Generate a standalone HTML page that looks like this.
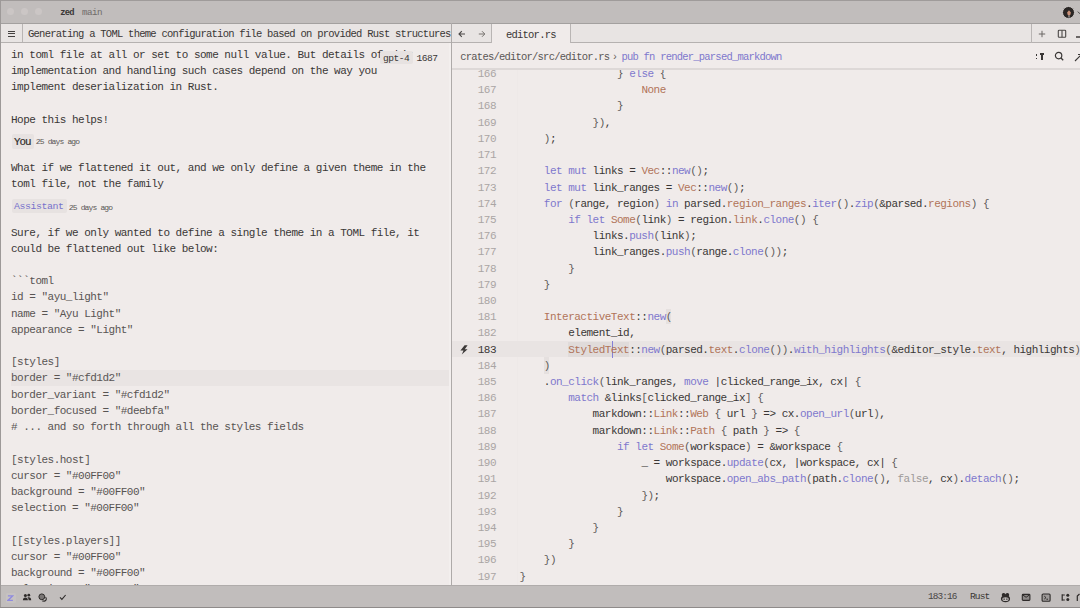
<!DOCTYPE html>
<html><head><meta charset="utf-8">
<style>
*{margin:0;padding:0;box-sizing:border-box}
html,body{width:1080px;height:608px;overflow:hidden;background:#f0ebea}
body{position:relative;font-family:"Liberation Mono",monospace;color:#3a3736}
.abs{position:absolute}
#titlebar{left:0;top:0;width:1080px;height:23px;background:#c1bdbc;border-top:1px solid #9f9b9a}
#tabrow{left:0;top:23px;width:1080px;height:20px;background:#e8e4e3;border-top:1px solid #a3a09f;border-bottom:1px solid #b5b1b0}
#status{left:0;top:585px;width:1080px;height:23px;background:#c1bdbc;border-top:1px solid #b0acab;border-bottom:1px solid #8f8b8a}
.light{width:7.5px;height:7.5px;border-radius:50%;background:#cbc6c5;top:7.6px}
.ui{font-size:10.5px;letter-spacing:-0.78px;white-space:pre}
.buf{font-size:11px;letter-spacing:-0.505px;white-space:pre}
.ln{position:absolute;height:16.2px;line-height:16.2px}
#left{left:0;top:43px;width:451px;height:542px;overflow:hidden;background:#f0ebea}
#right{left:452px;top:43px;width:628px;height:542px;overflow:hidden;background:#f0ebea}
#codeclip{position:absolute;left:0;top:26px;width:628px;height:516px;overflow:hidden}
#codeinner{position:absolute;left:0;top:-26px;width:628px;height:542px}
#divider{left:451px;top:23px;width:1px;height:562px;background:#aeaaa9}
#frameL{left:0;top:0;width:1px;height:608px;background:#9d9998}
.kw{color:#7e78cd}
.ty{color:#b07459}
.fn{color:#7e78cd}
.gr{color:#9e9a99}
.pb{color:#5f5b5a}
.gut{color:#aaa5a4}
.gutA{color:#3a3736}
.prose{color:#3a3736}
.cb{color:#585453}
</style></head><body>
<div id="titlebar" class="abs"></div>
<div class="abs light" style="left:6.6px"></div>
<div class="abs light" style="left:20.6px"></div>
<div class="abs light" style="left:34.8px"></div>
<div class="abs" style="left:60.3px;top:5.4px;line-height:16px;font-size:8.8px;letter-spacing:-0.75px;font-weight:bold;color:#3a3736;white-space:pre">zed</div>
<div class="abs" style="left:82px;top:5px;line-height:16px;font-size:9.2px;letter-spacing:-0.55px;color:#6f6b6a;white-space:pre">main</div>

<div id="tabrow" class="abs"></div>

<div id="left" class="abs">
<div class="abs" style="left:11.2px;top:327.2px;width:438.5px;height:15.4px;background:#e9e4e3"></div>
<div class="abs" style="left:448.5px;top:0;width:2.5px;height:542px;background:#f3efee"></div>
<div class="ln buf prose" style="top:3.67px;left:11.00px">in toml file at all or set to some null value. But details of this</div>
<div class="ln buf prose" style="top:19.88px;left:11.00px">implementation and handling such cases depend on the way you</div>
<div class="ln buf prose" style="top:36.09px;left:11.00px">implement deserialization in Rust.</div>
<div class="ln buf prose" style="top:68.51px;left:11.00px">Hope this helps!</div>
<div class="ln buf prose" style="top:117.07px;left:11.00px">What if we flattened it out, and we only define a given theme in the</div>
<div class="ln buf prose" style="top:133.28px;left:11.00px">toml file, not the family</div>
<div class="ln buf prose" style="top:181.57px;left:11.00px">Sure, if we only wanted to define a single theme in a TOML file, it</div>
<div class="ln buf prose" style="top:197.78px;left:11.00px">could be flattened out like below:</div>
<div class="ln buf cb" style="top:230.20px;left:11.00px">```toml</div>
<div class="ln buf cb" style="top:246.41px;left:11.00px">id = "ayu_light"</div>
<div class="ln buf cb" style="top:262.62px;left:11.00px">name = "Ayu Light"</div>
<div class="ln buf cb" style="top:278.83px;left:11.00px">appearance = "Light"</div>
<div class="ln buf cb" style="top:311.25px;left:11.00px">[styles]</div>
<div class="ln buf cb" style="top:327.46px;left:11.00px">border = "#cfd1d2"</div>
<div class="ln buf cb" style="top:343.67px;left:11.00px">border_variant = "#cfd1d2"</div>
<div class="ln buf cb" style="top:359.88px;left:11.00px">border_focused = "#deebfa"</div>
<div class="ln buf cb" style="top:376.09px;left:11.00px"># ... and so forth through all the styles fields</div>
<div class="ln buf cb" style="top:408.51px;left:11.00px">[styles.host]</div>
<div class="ln buf cb" style="top:424.72px;left:11.00px">cursor = "#00FF00"</div>
<div class="ln buf cb" style="top:440.93px;left:11.00px">background = "#00FF00"</div>
<div class="ln buf cb" style="top:457.14px;left:11.00px">selection = "#00FF00"</div>
<div class="ln buf cb" style="top:489.56px;left:11.00px">[[styles.players]]</div>
<div class="ln buf cb" style="top:505.77px;left:11.00px">cursor = "#00FF00"</div>
<div class="ln buf cb" style="top:521.98px;left:11.00px">background = "#00FF00"</div>
<div class="ln buf cb" style="top:538.19px;left:11.00px">selection = "#00FF00"</div>
</div>

<div id="right" class="abs">
<div id="codeclip"><div id="codeinner">
<div class="abs" style="left:65px;top:0;width:1px;height:542px;background:#eee9e8"></div>
<div class="abs" style="left:0;top:298.2px;width:628px;height:15.9px;background:#e9e4e3"></div>
<div class="abs" style="left:116.1px;top:298.6px;width:61px;height:15.4px;background:#e0dbda"></div>
<div class="abs" style="left:213.8px;top:265.9px;width:5.6px;height:15.3px;background:#e5e0df"></div>
<div class="abs" style="left:92.3px;top:314.2px;width:4.6px;height:16.8px;background:#e5e0df"></div>
<div class="abs" style="left:159.6px;top:298.2px;width:1.1px;height:16.4px;background:#8580d8"></div>
<svg class="abs" style="left:7.5px;top:302px" width="8" height="10" viewBox="0 0 8 10"><path d="M4.6 0.3H7.6L4.8 4.2H7.6L1.8 9.6 3.5 5.6H0.4Z" fill="#3d3a39"/></svg>
<div class="ln buf gut" style="top:23.07px;right:584.00px">166</div>
<div class="ln buf" style="top:23.07px;left:165.00px"><span class="pb">}</span> <span class="kw">else</span> <span class="pb">{</span></div>
<div class="ln buf gut" style="top:39.28px;right:584.00px">167</div>
<div class="ln buf" style="top:39.28px;left:189.40px"><span class="ty">None</span></div>
<div class="ln buf gut" style="top:55.49px;right:584.00px">168</div>
<div class="ln buf" style="top:55.49px;left:165.00px"><span class="pb">}</span></div>
<div class="ln buf gut" style="top:71.70px;right:584.00px">169</div>
<div class="ln buf" style="top:71.70px;left:140.60px"><span class="pb">}</span><span class="pb">)</span>,</div>
<div class="ln buf gut" style="top:87.91px;right:584.00px">170</div>
<div class="ln buf" style="top:87.91px;left:91.80px"><span class="pb">)</span>;</div>
<div class="ln buf gut" style="top:104.12px;right:584.00px">171</div>
<div class="ln buf gut" style="top:120.33px;right:584.00px">172</div>
<div class="ln buf" style="top:120.33px;left:91.80px"><span class="kw">let</span> <span class="kw">mut</span> links = <span class="ty">Vec</span>::<span class="fn">new</span><span class="pb">(</span><span class="pb">)</span>;</div>
<div class="ln buf gut" style="top:136.54px;right:584.00px">173</div>
<div class="ln buf" style="top:136.54px;left:91.80px"><span class="kw">let</span> <span class="kw">mut</span> link_ranges = <span class="ty">Vec</span>::<span class="fn">new</span><span class="pb">(</span><span class="pb">)</span>;</div>
<div class="ln buf gut" style="top:152.75px;right:584.00px">174</div>
<div class="ln buf" style="top:152.75px;left:91.80px"><span class="kw">for</span> <span class="pb">(</span>range, region<span class="pb">)</span> <span class="kw">in</span> parsed.<span class="ty">region_ranges</span>.<span class="fn">iter</span><span class="pb">(</span><span class="pb">)</span>.<span class="fn">zip</span><span class="pb">(</span>&amp;parsed.<span class="ty">regions</span><span class="pb">)</span> <span class="pb">{</span></div>
<div class="ln buf gut" style="top:168.96px;right:584.00px">175</div>
<div class="ln buf" style="top:168.96px;left:116.20px"><span class="kw">if</span> <span class="kw">let</span> <span class="ty">Some</span><span class="pb">(</span>link<span class="pb">)</span> = region.<span class="ty">link</span>.<span class="fn">clone</span><span class="pb">(</span><span class="pb">)</span> <span class="pb">{</span></div>
<div class="ln buf gut" style="top:185.17px;right:584.00px">176</div>
<div class="ln buf" style="top:185.17px;left:140.60px">links.<span class="fn">push</span><span class="pb">(</span>link<span class="pb">)</span>;</div>
<div class="ln buf gut" style="top:201.38px;right:584.00px">177</div>
<div class="ln buf" style="top:201.38px;left:140.60px">link_ranges.<span class="fn">push</span><span class="pb">(</span>range.<span class="fn">clone</span><span class="pb">(</span><span class="pb">)</span><span class="pb">)</span>;</div>
<div class="ln buf gut" style="top:217.59px;right:584.00px">178</div>
<div class="ln buf" style="top:217.59px;left:116.20px"><span class="pb">}</span></div>
<div class="ln buf gut" style="top:233.80px;right:584.00px">179</div>
<div class="ln buf" style="top:233.80px;left:91.80px"><span class="pb">}</span></div>
<div class="ln buf gut" style="top:250.01px;right:584.00px">180</div>
<div class="ln buf gut" style="top:266.22px;right:584.00px">181</div>
<div class="ln buf" style="top:266.22px;left:91.80px"><span class="ty">InteractiveText</span>::<span class="fn">new</span><span class="pb">(</span></div>
<div class="ln buf gut" style="top:282.43px;right:584.00px">182</div>
<div class="ln buf" style="top:282.43px;left:116.20px">element_id,</div>
<div class="ln buf gutA" style="top:298.64px;right:584.00px">183</div>
<div class="ln buf" style="top:298.64px;left:116.20px"><span class="ty">StyledText</span>::<span class="fn">new</span><span class="pb">(</span>parsed.<span class="ty">text</span>.<span class="fn">clone</span><span class="pb">(</span><span class="pb">)</span><span class="pb">)</span>.<span class="fn">with_highlights</span><span class="pb">(</span>&amp;editor_style.<span class="ty">text</span>, highlights<span class="pb">)</span></div>
<div class="ln buf gut" style="top:314.85px;right:584.00px">184</div>
<div class="ln buf" style="top:314.85px;left:91.80px"><span class="pb">)</span></div>
<div class="ln buf gut" style="top:331.06px;right:584.00px">185</div>
<div class="ln buf" style="top:331.06px;left:91.80px">.<span class="fn">on_click</span><span class="pb">(</span>link_ranges, <span class="kw">move</span> |clicked_range_ix, cx| <span class="pb">{</span></div>
<div class="ln buf gut" style="top:347.27px;right:584.00px">186</div>
<div class="ln buf" style="top:347.27px;left:116.20px"><span class="kw">match</span> &amp;links<span class="pb">[</span>clicked_range_ix<span class="pb">]</span> <span class="pb">{</span></div>
<div class="ln buf gut" style="top:363.48px;right:584.00px">187</div>
<div class="ln buf" style="top:363.48px;left:140.60px">markdown::<span class="ty">Link</span>::<span class="ty">Web</span> <span class="pb">{</span> url <span class="pb">}</span> =&gt; cx.<span class="fn">open_url</span><span class="pb">(</span>url<span class="pb">)</span>,</div>
<div class="ln buf gut" style="top:379.69px;right:584.00px">188</div>
<div class="ln buf" style="top:379.69px;left:140.60px">markdown::<span class="ty">Link</span>::<span class="ty">Path</span> <span class="pb">{</span> path <span class="pb">}</span> =&gt; <span class="pb">{</span></div>
<div class="ln buf gut" style="top:395.90px;right:584.00px">189</div>
<div class="ln buf" style="top:395.90px;left:165.00px"><span class="kw">if</span> <span class="kw">let</span> <span class="ty">Some</span><span class="pb">(</span>workspace<span class="pb">)</span> = &amp;workspace <span class="pb">{</span></div>
<div class="ln buf gut" style="top:412.11px;right:584.00px">190</div>
<div class="ln buf" style="top:412.11px;left:189.40px">_ = workspace.<span class="fn">update</span><span class="pb">(</span>cx, |workspace, cx| <span class="pb">{</span></div>
<div class="ln buf gut" style="top:428.32px;right:584.00px">191</div>
<div class="ln buf" style="top:428.32px;left:213.80px">workspace.<span class="fn">open_abs_path</span><span class="pb">(</span>path.<span class="fn">clone</span><span class="pb">(</span><span class="pb">)</span>, <span class="gr">false</span>, cx<span class="pb">)</span>.<span class="fn">detach</span><span class="pb">(</span><span class="pb">)</span>;</div>
<div class="ln buf gut" style="top:444.53px;right:584.00px">192</div>
<div class="ln buf" style="top:444.53px;left:189.40px"><span class="pb">}</span><span class="pb">)</span>;</div>
<div class="ln buf gut" style="top:460.74px;right:584.00px">193</div>
<div class="ln buf" style="top:460.74px;left:165.00px"><span class="pb">}</span></div>
<div class="ln buf gut" style="top:476.95px;right:584.00px">194</div>
<div class="ln buf" style="top:476.95px;left:140.60px"><span class="pb">}</span></div>
<div class="ln buf gut" style="top:493.16px;right:584.00px">195</div>
<div class="ln buf" style="top:493.16px;left:116.20px"><span class="pb">}</span></div>
<div class="ln buf gut" style="top:509.37px;right:584.00px">196</div>
<div class="ln buf" style="top:509.37px;left:91.80px"><span class="pb">}</span><span class="pb">)</span></div>
<div class="ln buf gut" style="top:525.58px;right:584.00px">197</div>
<div class="ln buf" style="top:525.58px;left:67.40px"><span class="pb">}</span></div>
</div></div>
</div>

<!-- badges (page coords) -->
<div class="abs" style="left:11.5px;top:134px;width:22.4px;height:14.6px;background:#e7e2e1;border-radius:2px"></div>
<div class="abs" style="left:14px;top:133.6px;line-height:16px;font-size:10.8px;letter-spacing:-1.0px;color:#2f2c2b;-webkit-text-stroke:0.2px #2f2c2b;white-space:pre">You</div>
<div class="abs" style="left:35.8px;top:134px;line-height:16px;font-size:8px;letter-spacing:-0.85px;color:#5a5655;white-space:pre">25 days ago</div>
<div class="abs" style="left:11.5px;top:199.1px;width:55px;height:14.3px;background:#e7e2e1;border-radius:2px"></div>
<div class="abs" style="left:14px;top:199px;line-height:16px;font-size:9.9px;letter-spacing:-0.43px;color:#7772cc;white-space:pre">Assistant</div>
<div class="abs" style="left:68.8px;top:199.6px;line-height:16px;font-size:8px;letter-spacing:-0.85px;color:#5a5655;white-space:pre">25 days ago</div>
<div class="abs" style="left:380.4px;top:51px;width:33px;height:13.4px;background:#e7e2e1;border-radius:2px"></div>
<div class="abs" style="left:383px;top:51px;line-height:16px;font-size:9.6px;letter-spacing:-0.5px;color:#3a3736;white-space:pre">gpt-4</div>
<div class="abs" style="left:413.4px;top:50px;width:30px;height:14px;background:#f0ebea"></div>
<div class="abs" style="left:416.5px;top:51.2px;line-height:16px;font-size:9.6px;letter-spacing:-0.5px;color:#3a3736;white-space:pre">1687</div>
<div id="divider" class="abs"></div>
<div id="status" class="abs"></div>

<!-- tab row pieces -->
<div class="abs" style="left:1px;top:24px;width:21px;height:18px;background:#e8e4e3"></div>
<div class="abs" style="left:22px;top:24px;width:1px;height:18px;background:#b9b5b4"></div>
<div class="abs" style="left:7.8px;top:30.6px;width:7.6px;height:1.1px;background:#444140"></div>
<div class="abs" style="left:7.8px;top:33.1px;width:7.6px;height:1.1px;background:#444140"></div>
<div class="abs" style="left:7.8px;top:35.9px;width:7.6px;height:1.1px;background:#444140"></div>
<div class="abs ui" style="left:28px;top:26.2px;line-height:16px;color:#3a3736;letter-spacing:-0.74px">Generating a TOML theme configuration file based on provided Rust structures</div>

<!-- right tab bar -->
<div class="abs" style="left:491px;top:24px;width:1px;height:19px;background:#b9b5b4"></div>
<div class="abs" style="left:492px;top:24px;width:78px;height:19px;background:#f0ebea"></div>
<div class="abs" style="left:569.5px;top:24px;width:1px;height:19px;background:#b9b5b4"></div>
<div class="abs ui" style="left:506px;top:26.5px;line-height:16px;color:#3a3736">editor.rs</div>
<div class="abs" style="left:1031px;top:24px;width:1px;height:19px;background:#b9b5b4"></div>
<svg class="abs" style="left:455px;top:27px" width="14" height="14" viewBox="0 0 14 14"><path d="M10 7H4.2M6.8 4.2L4 7l2.8 2.8" fill="none" stroke="#4a4746" stroke-width="1.1"/></svg>
<svg class="abs" style="left:475px;top:27px" width="14" height="14" viewBox="0 0 14 14"><path d="M3.8 7H9.6M7 4.2L9.8 7 7 9.8" fill="none" stroke="#77736f" stroke-width="1"/></svg>
<svg class="abs" style="left:1036px;top:27px" width="12" height="14" viewBox="0 0 12 14"><path d="M6 3.8v6.4M2.8 7h6.4" fill="none" stroke="#6a6665" stroke-width="1"/></svg>
<svg class="abs" style="left:1056px;top:28px" width="12" height="12" viewBox="0 0 12 12"><rect x="2.3" y="2.3" width="7.4" height="7" rx="0.8" fill="none" stroke="#4a4746" stroke-width="1.1"/><path d="M6 2.3v7" stroke="#4a4746" stroke-width="1.1"/></svg>
<div class="abs" style="left:1076px;top:36px;width:4px;height:2px;background:#6a6665"></div>

<!-- breadcrumb -->
<div class="abs" style="left:452px;top:67.8px;width:628px;height:1.8px;background:#ddd8d7"></div>
<div class="abs ui" style="left:460.3px;top:48.6px;line-height:16px;color:#5a5655">crates/editor/src/editor.rs</div>
<div class="abs ui" style="left:611.8px;top:48.6px;line-height:16px;color:#6a6665">&#8250;</div>
<div class="abs ui" style="left:621.5px;top:48.6px;line-height:16px;color:#7e78cd">pub fn render_parsed_markdown</div>
<div class="abs" style="left:1035.6px;top:54.2px;width:1.9px;height:1.9px;background:#3a3736"></div>
<div class="abs" style="left:1035.6px;top:57.6px;width:1.9px;height:1.9px;background:#3a3736"></div>
<div class="abs" style="left:1039.6px;top:53.4px;width:4.6px;height:1.3px;background:#3a3736"></div>
<div class="abs" style="left:1041.2px;top:53.4px;width:1.4px;height:6.3px;background:#3a3736"></div>
<svg class="abs" style="left:1052.8px;top:50.2px" width="12" height="12" viewBox="0 0 12 12"><circle cx="5.6" cy="5.6" r="3.2" fill="none" stroke="#3a3736" stroke-width="1.2"/><path d="M8 8l2.2 2.2" stroke="#3a3736" stroke-width="1.3"/></svg>
<svg class="abs" style="left:1073px;top:51px" width="10" height="12" viewBox="0 0 10 12"><path d="M2 10L8.5 3.5M5 3.5h3.5V7" fill="none" stroke="#3a3736" stroke-width="1.1"/></svg>

<!-- title bar extras -->
<div class="abs" style="left:1062.3px;top:6px;width:12.8px;height:12.8px;border-radius:50%;background:#2a2625;border:0.8px solid #cfcac9"></div>
<svg class="abs" style="left:1065.5px;top:9.5px" width="6" height="8" viewBox="0 0 6 8"><path d="M3 0.2L4.9 2.5 4.4 4.4 3.6 5.4H2.4L1.6 4.4 1.1 2.5Z" fill="#c99078"/><path d="M2.4 5.3H3.6L3.9 7.4H2.1Z" fill="#8d8a8a"/></svg>
<svg class="abs" style="left:1076.5px;top:9.5px" width="6" height="6" viewBox="0 0 6 6"><path d="M0.8 1.6l2.2 2.2 2.2-2.2" fill="none" stroke="#4a4746" stroke-width="1"/></svg>

<!-- status bar -->
<div class="abs ui" style="left:928px;top:589px;line-height:16px;color:#4a4746;font-size:9.4px;letter-spacing:-0.9px">183:16</div>
<div class="abs ui" style="left:970px;top:589px;line-height:16px;color:#3a3736;font-size:9.6px;letter-spacing:-0.9px">Rust</div>

<div id="frameL" class="abs"></div>

<!-- status bar icons left -->
<div class="abs" style="left:5.5px;top:592.5px;width:10px;height:10px;background:#c6c2c1;border-radius:1.5px"></div>
<svg class="abs" style="left:7.3px;top:594.5px" width="7" height="7" viewBox="0 0 7 7"><path d="M0.9 0.9H5.6L0.9 5.4H5.9" fill="none" stroke="#8f8adf" stroke-width="1.35"/></svg>
<svg class="abs" style="left:22px;top:593px" width="10" height="8" viewBox="0 0 10 8"><circle cx="3.4" cy="2.4" r="1.5" fill="#2e2b2a"/><circle cx="6.8" cy="2.2" r="1.4" fill="#2e2b2a"/><path d="M0.9 7.3C0.9 5.4 1.9 4.5 3.4 4.5S5.9 5.4 5.9 7.3ZM5.4 4.6C5.8 4.4 6.3 4.3 6.8 4.3 8.3 4.3 9.2 5.2 9.2 7.3H6.6C6.6 6 6.2 5.2 5.4 4.6Z" fill="#2e2b2a"/></svg>
<svg class="abs" style="left:38px;top:592.5px" width="10" height="9" viewBox="0 0 10 9"><circle cx="3.8" cy="3.8" r="2.9" fill="#7a7675" stroke="#2e2b2a" stroke-width="1"/><path d="M7.5 4.2C8.8 5.3 8.6 7.6 6.4 8.1L4.2 8" fill="none" stroke="#2e2b2a" stroke-width="1.1"/></svg>
<svg class="abs" style="left:59px;top:593.5px" width="8" height="7" viewBox="0 0 8 7"><path d="M1 3.4L2.9 5.4 6.6 1" fill="none" stroke="#2e2b2a" stroke-width="1.1"/></svg>

<!-- status bar icons right -->
<svg class="abs" style="left:1000px;top:591.5px" width="11" height="11" viewBox="0 0 11 11"><path d="M2.2 4.2C1.2 2.5 2.2 1 3.8 1.1 4.8 1.2 5.3 2 5.5 2.6 5.7 2 6.2 1.2 7.2 1.1 8.8 1 9.8 2.5 8.8 4.2 10 5 10.2 6.3 10 7.6 9.6 9.4 7.8 10.2 5.5 10.2S1.4 9.4 1 7.6C.8 6.3 1 5 2.2 4.2Z" fill="#2e2b2a"/><ellipse cx="5.5" cy="7.2" rx="3.2" ry="1.9" fill="#c1bdbc"/><rect x="3.6" y="6.4" width="1" height="1.6" fill="#2e2b2a"/><rect x="6.4" y="6.4" width="1" height="1.6" fill="#2e2b2a"/></svg>
<svg class="abs" style="left:1021px;top:592.5px" width="10" height="8" viewBox="0 0 10 8"><rect x="1.3" y="1.4" width="7.6" height="6" rx="0.8" fill="#8d8988" stroke="#2e2b2a" stroke-width="1.1"/><path d="M1.6 1.8L5.1 4.3 8.6 1.8" fill="none" stroke="#2e2b2a" stroke-width="1"/></svg>
<svg class="abs" style="left:1040.5px;top:592.5px" width="10" height="9" viewBox="0 0 10 9"><rect x="1.1" y="1" width="8" height="7.3" rx="1" fill="#9d9998" stroke="#2e2b2a" stroke-width="1.1"/><path d="M3.3 3.2L5 4.6 3.3 6M5.4 6.2H7" fill="none" stroke="#2e2b2a" stroke-width="1"/></svg>
<svg class="abs" style="left:1060.5px;top:592.5px" width="10" height="9" viewBox="0 0 10 9"><path d="M1.2 1.2v6.6M1.2 2h2.6M1.2 7h2.6" fill="none" stroke="#2e2b2a" stroke-width="1.2"/><circle cx="6.8" cy="2.3" r="1.5" fill="#2e2b2a"/><circle cx="6.8" cy="6.6" r="1.5" fill="#2e2b2a"/></svg>
<svg class="abs" style="left:1076px;top:592.5px" width="4" height="9" viewBox="0 0 4 9"><path d="M1.3 8V3L3.5 1" fill="none" stroke="#2e2b2a" stroke-width="1.2"/></svg>

<!-- window frame bottom -->
<div class="abs" style="left:0;top:607px;width:1080px;height:1px;background:#8f8b8a"></div>

</body></html>
